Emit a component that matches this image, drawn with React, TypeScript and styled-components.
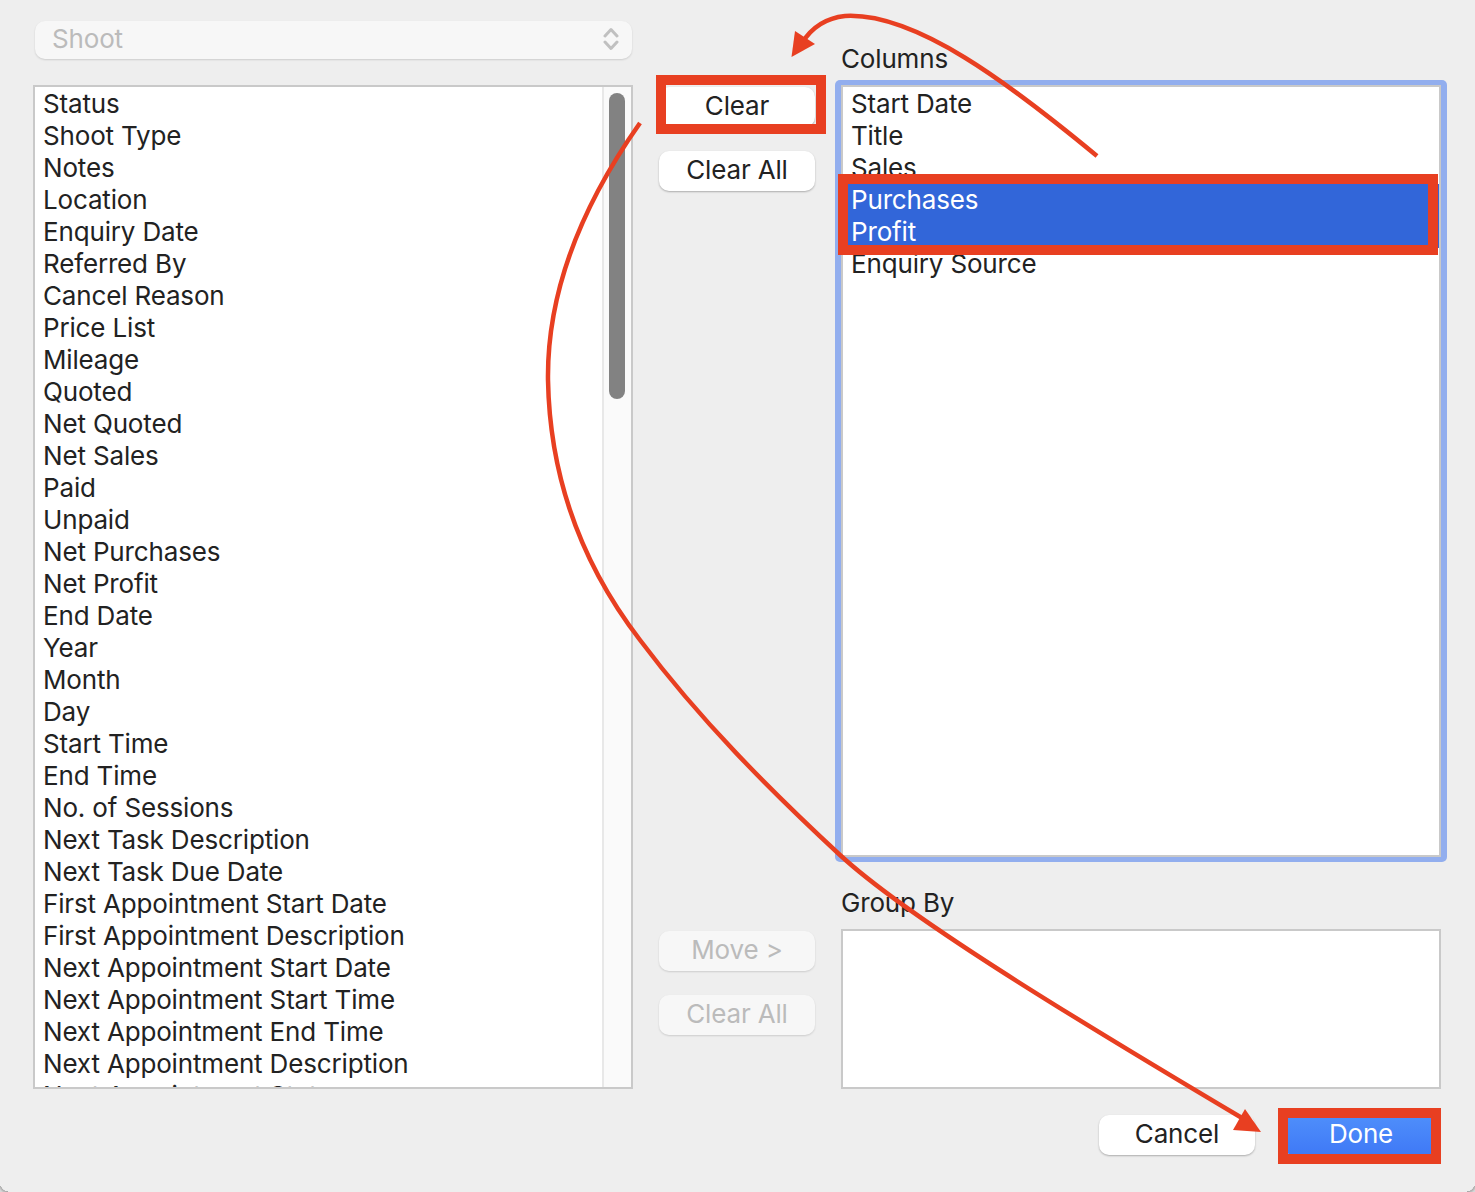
import React from "react";
import styled, { createGlobalStyle } from "styled-components";

const Global = createGlobalStyle`
  html, body { margin: 0; padding: 0; background: #eeeeee; }
  * { box-sizing: border-box; }
`;

const Page = styled.div`
  position: relative;
  width: 1475px;
  height: 1192px;
  overflow: hidden;
  background: #eeeeee;
  color: #222222;
  font-family: Inter, "Liberation Sans", sans-serif;
  font-size: 26px;
  line-height: 32px;
  letter-spacing: -0.16px;
  padding: 21px 34px 0 33px;
`;

const Columns = styled.div`
  display: grid;
  grid-template-columns: 600px 156px 600px;
  column-gap: 26px;
  height: 1068px;
`;

const Column = styled.div`
  display: flex;
  flex-direction: column;
  height: 100%;
`;

const SelectBox = styled.div`
  display: flex;
  align-items: center;
  justify-content: space-between;
  height: 38px;
  padding: 0 13px 2px 17px;
  margin: 0 1px 26px 2px;
  border-radius: 10px;
  background: #f7f7f7;
  color: #bbbbbb;
  box-shadow: 0 1px 2px rgba(0, 0, 0, 0.14);
`;

const ListBox = styled.div<{ $height: number }>`
  position: relative;
  height: ${(p) => p.$height}px;
  border: 2px solid #c9c9c9;
  background: #ffffff;
  overflow: hidden;
  padding: 1px 8px;
`;

const Row = styled.div<{ $selected?: boolean }>`
  height: 32px;
  white-space: nowrap;
  margin: 0 -8px;
  padding: 0 8px;
  background: ${(p) => (p.$selected ? "#3266d9" : "transparent")};
  color: ${(p) => (p.$selected ? "#ffffff" : "inherit")};
`;

const ScrollTrack = styled.div`
  position: absolute;
  top: 0;
  right: 0;
  bottom: 0;
  width: 29px;
  background: #fafafa;
  border-left: 2px solid #e8e8e8;
`;

const ScrollThumb = styled.div`
  position: absolute;
  top: 6px;
  left: 5px;
  width: 16px;
  height: 306px;
  border-radius: 8px;
  background: #828282;
`;

const MiddleColumn = styled(Column)`
  padding-top: 66px;
`;

const PushButton = styled.div<{ $disabled?: boolean; $primary?: boolean }>`
  width: 156px;
  height: 40px;
  flex: none;
  display: flex;
  align-items: center;
  justify-content: center;
  padding-bottom: 2px;
  border-radius: 10px;
  background: ${(p) =>
    p.$primary
      ? "linear-gradient(#4f8ffb, #3f79f6)"
      : p.$disabled
        ? "#f7f7f7"
        : "#ffffff"};
  color: ${(p) => (p.$primary ? "#ffffff" : p.$disabled ? "#bbbbbb" : "#222222")};
  box-shadow: 0 1px 2px rgba(0, 0, 0, ${(p) => (p.$disabled ? 0.14 : 0.28)});
`;

const ButtonStack = styled.div<{ $bottom?: boolean }>`
  display: flex;
  flex-direction: column;
  gap: 24px;
  margin-top: ${(p) => (p.$bottom ? "auto" : "0")};
  margin-bottom: ${(p) => (p.$bottom ? "54px" : "0")};
`;

const FieldLabel = styled.div<{ $gap: number }>`
  height: 32px;
  margin-bottom: ${(p) => p.$gap}px;
`;

const RightColumn = styled(Column)`
  padding-top: 22px;
`;

const FocusRing = styled.div`
  margin: 0 -6px 25px;
  padding: 5px 6px;
  border-radius: 5px;
  background: #92aeee;
`;

const Footer = styled.div`
  display: flex;
  justify-content: flex-end;
  gap: 28px;
  padding: 26px 2px 0 0;
`;

const Annotations = styled.svg`
  position: absolute;
  inset: 0;
  width: 1475px;
  height: 1192px;
  pointer-events: none;
`;

const Callout = styled.div<{ $x: number; $y: number; $w: number; $h: number }>`
  position: absolute;
  left: ${(p) => p.$x}px;
  top: ${(p) => p.$y}px;
  width: ${(p) => p.$w}px;
  height: ${(p) => p.$h}px;
  border: 10px solid #e83f21;
`;

const Corner = styled.div<{ $side: "left" | "right" }>`
  position: absolute;
  bottom: 0;
  ${(p) => p.$side}: 0;
  width: 8px;
  height: 6px;
  background: ${(p) =>
    `radial-gradient(circle at ${p.$side === "left" ? "8px -2px" : "0 -2px"}, transparent 7px, #a9a9a9 7.5px, #d8d8d8 10px)`};
`;

const sourceFields = [
  "Status", "Shoot Type", "Notes", "Location", "Enquiry Date", "Referred By",
  "Cancel Reason", "Price List", "Mileage", "Quoted", "Net Quoted", "Net Sales",
  "Paid", "Unpaid", "Net Purchases", "Net Profit", "End Date", "Year", "Month",
  "Day", "Start Time", "End Time", "No. of Sessions", "Next Task Description",
  "Next Task Due Date", "First Appointment Start Date", "First Appointment Description",
  "Next Appointment Start Date", "Next Appointment Start Time", "Next Appointment End Time",
  "Next Appointment Description", "Next Appointment Status",
];

const columns = [
  { name: "Start Date" },
  { name: "Title" },
  { name: "Sales" },
  { name: "Purchases", selected: true },
  { name: "Profit", selected: true },
  { name: "Enquiry Source" },
];

export default function App() {
  return (
    <Page>
      <Global />
      <Columns>
        <Column>
          <SelectBox>
            Shoot
            <svg width="16" height="24" viewBox="0 0 16 24" fill="none" stroke="#c0c0c0" strokeWidth="3" strokeLinecap="round" strokeLinejoin="round">
              <path d="M2 9 8 2.5 14 9" />
              <path d="M2 15 8 21.5 14 15" />
            </svg>
          </SelectBox>
          <ListBox $height={1004}>
            {sourceFields.map((f) => (
              <Row key={f}>{f}</Row>
            ))}
            <ScrollTrack>
              <ScrollThumb />
            </ScrollTrack>
          </ListBox>
        </Column>

        <MiddleColumn>
          <ButtonStack>
            <PushButton>Clear</PushButton>
            <PushButton>Clear All</PushButton>
          </ButtonStack>
          <ButtonStack $bottom>
            <PushButton $disabled>Move &gt;</PushButton>
            <PushButton $disabled>Clear All</PushButton>
          </ButtonStack>
        </MiddleColumn>

        <RightColumn>
          <FieldLabel $gap={5}>Columns</FieldLabel>
          <FocusRing>
            <ListBox $height={772}>
              {columns.map((c) => (
                <Row key={c.name} $selected={c.selected}>{c.name}</Row>
              ))}
            </ListBox>
          </FocusRing>
          <FieldLabel $gap={10}>Group By</FieldLabel>
          <ListBox $height={160} />
        </RightColumn>
      </Columns>

      <Footer>
        <PushButton>Cancel</PushButton>
        <PushButton $primary>Done</PushButton>
      </Footer>

      <Callout $x={656} $y={75} $w={170} $h={59} />
      <Callout $x={838} $y={174} $w={600} $h={81} />
      <Callout $x={1278} $y={1108} $w={163} $h={56} />

      <Annotations viewBox="0 0 1475 1192" fill="none">
        <path d="M1097 156 C1010 84 915 12 845 16 C826 18 812 27 802 43" stroke="#e83f21" strokeWidth="4.5" />
        <polygon points="791.5,57 795,31 815,44" fill="#e83f21" />
        <path d="M640 123 C575 215 547 300 548 380 C550 490 590 575 640 640 C700 720 770 790 840 855 C905 915 1060 1010 1242 1118" stroke="#e83f21" strokeWidth="4.5" />
        <polygon points="1261,1132 1245,1109 1233,1130" fill="#e83f21" />
      </Annotations>

      <Corner $side="left" />
      <Corner $side="right" />
    </Page>
  );
}
